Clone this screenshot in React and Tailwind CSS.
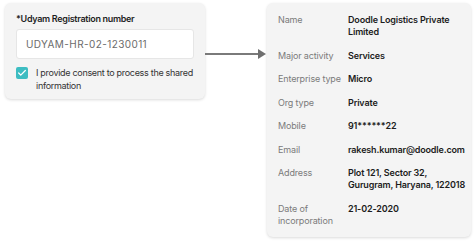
import { Check } from "lucide-react";

const details = [
    { label: "Name", value: "Doodle Logistics Private Limited" },
    { label: "Major activity", value: "Services" },
    { label: "Enterprise type", value: "Micro" },
    { label: "Org type", value: "Private" },
    { label: "Mobile", value: "91******22" },
    { label: "Email", value: "rakesh.kumar@doodle.com" },
    { label: "Address", value: "Plot 121, Sector 32, Gurugram, Haryana, 122018" },
    { label: "Date of incorporation", value: "21-02-2020" },
];

export default function App() {
    return (
        <div className="w-[474px] h-[243px] bg-white flex items-start pt-[3px] pl-[5px] font-['Inter',sans-serif]">
            <div className="w-[200px] shrink-0 bg-[#f4f4f4] rounded-md shadow-[0_1px_3px_rgba(0,0,0,0.15)] pl-[11px] pr-[8px] pt-[10px] pb-[7px]">
                <label className="block text-[9px] leading-[12px] font-semibold text-[#1f1f1f] tracking-[-0.3px]">
                    *Udyam Registration number
                </label>
                <div className="mt-[4px] mr-[3px] h-[30px] bg-white rounded-[3px] border border-[#e6e6e6] flex items-center px-[9px] text-[10px] text-[#6b6b6b] tracking-[0.4px]">
                    UDYAM-HR-02-1230011
                </div>
                <div className="mt-[7px] flex gap-[8px]">
                    <div className="w-[12px] h-[12px] mt-[1px] bg-[#3dbdc2] rounded-[2px] flex items-center justify-center shrink-0">
                        <Check size={10} strokeWidth={3} className="text-white" />
                    </div>
                    <p className="text-[9px] leading-[13px] text-[#333] tracking-[-0.3px]">
                        I provide consent to process the shared information
                    </p>
                </div>
            </div>

            <div className="mt-[46px] flex items-center shrink-0">
                <div className="w-[53px] h-[1.5px] bg-[#7a7a7a]" />
                <svg width="8" height="10" viewBox="0 0 8 10">
                    <path d="M0 0 L8 5 L0 10 Z" fill="#6f6f6f" />
                </svg>
            </div>

            <div className="w-[204px] shrink-0 ml-[1px] bg-[#f4f4f4] rounded-md shadow-[0_1px_3px_rgba(0,0,0,0.15)] pl-[11px] pr-[4px] pt-[11px] pb-[10px] flex flex-col gap-[11.5px]">
                {details.map(item => (
                    <div key={item.label} className="flex text-[9px] leading-[12px]">
                        <div className="w-[70px] shrink-0 text-[#7b7b7b] tracking-[-0.15px]">{item.label}</div>
                        <div className="w-[119px] font-semibold text-[#1c1c1c] tracking-[-0.15px]">{item.value}</div>
                    </div>
                ))}
            </div>
        </div>
    )
}
